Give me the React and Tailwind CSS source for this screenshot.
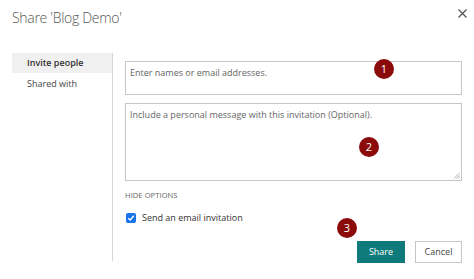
export default function App() {
  const font = { fontFamily: '"Open Sans", "Noto Sans", sans-serif' }
  return (
    <div className="relative w-[474px] h-[279px] bg-white overflow-hidden text-[#333]" style={font}>
      <div className="flex items-start justify-between pl-3 pr-[7px] pt-[7px] h-[53px]">
        <h1 className="text-[14px] font-light text-[#555] tracking-[-0.3px]">Share 'Blog Demo'</h1>
        <svg width="9" height="9" viewBox="0 0 9 9" className="mt-[2px]">
          <path d="M0.5 0.5 L8.5 8.5 M8.5 0.5 L0.5 8.5" stroke="#555" strokeWidth="1.3" />
        </svg>
      </div>
      <div className="flex">
        <div className="ml-3 w-[101px] h-[208px] border-r border-[#d6d6d6] text-[9px]">
          <div className="h-[20px] bg-[#f0f0f0] pl-[15px] flex items-center font-semibold text-[#333]">Invite people</div>
          <div className="pl-[15px] pt-[4px] text-[#444]">Shared with</div>
        </div>
        <div className="flex-1 pl-3 pr-3 pt-[8px]">
          <div className="h-[34px] border border-[#c6c6c6] px-[4px] pt-[4px] text-[9px] text-[#666]">Enter names or email addresses.</div>
          <div className="relative mt-[8px] h-[78px] border border-[#c6c6c6] px-[4px] pt-[4px] text-[9px] text-[#666]">
            Include a personal message with this invitation (Optional).
            <svg width="7" height="7" viewBox="0 0 7 7" className="absolute right-[1px] bottom-[1px]">
              <path d="M6.5 1 L1 6.5 M6.5 3.5 L3.5 6.5 M6.5 5.5 L5.5 6.5" stroke="#999" strokeWidth="0.8" />
            </svg>
          </div>
          <div className="mt-[9px] text-[7.5px] text-[#666] uppercase tracking-[0.1px]">Hide options</div>
          <div className="mt-[10px] flex items-center gap-[6px] text-[9px] text-[#333]">
            <span className="w-[10px] h-[10px] ml-[1px] rounded-[2px] bg-[#1a73e8] flex items-center justify-center">
              <svg width="8" height="8" viewBox="0 0 8 8">
                <path d="M1.3 4.2 L3.2 6 L6.8 1.8" stroke="white" strokeWidth="1.4" fill="none" />
              </svg>
            </span>
            <span>Send an email invitation</span>
          </div>
          <div className="mt-[16px] flex justify-end gap-[10px]">
            <button className="w-[48px] h-[22px] bg-[#0f7a79] text-white text-[9px]">Share</button>
            <button className="w-[47px] h-[22px] bg-white border border-[#c6c6c6] text-[#444] text-[9px]">Cancel</button>
          </div>
        </div>
      </div>
      <div className="absolute left-[374px] top-[59px] w-[20px] h-[20px] rounded-full bg-[#8b0b0b] text-white text-[11px] flex items-center justify-center">1</div>
      <div className="absolute left-[359px] top-[137px] w-[20px] h-[20px] rounded-full bg-[#8b0b0b] text-white text-[11px] flex items-center justify-center">2</div>
      <div className="absolute left-[337px] top-[218px] w-[20px] h-[20px] rounded-full bg-[#8b0b0b] text-white text-[11px] flex items-center justify-center">3</div>
    </div>
  )
}
